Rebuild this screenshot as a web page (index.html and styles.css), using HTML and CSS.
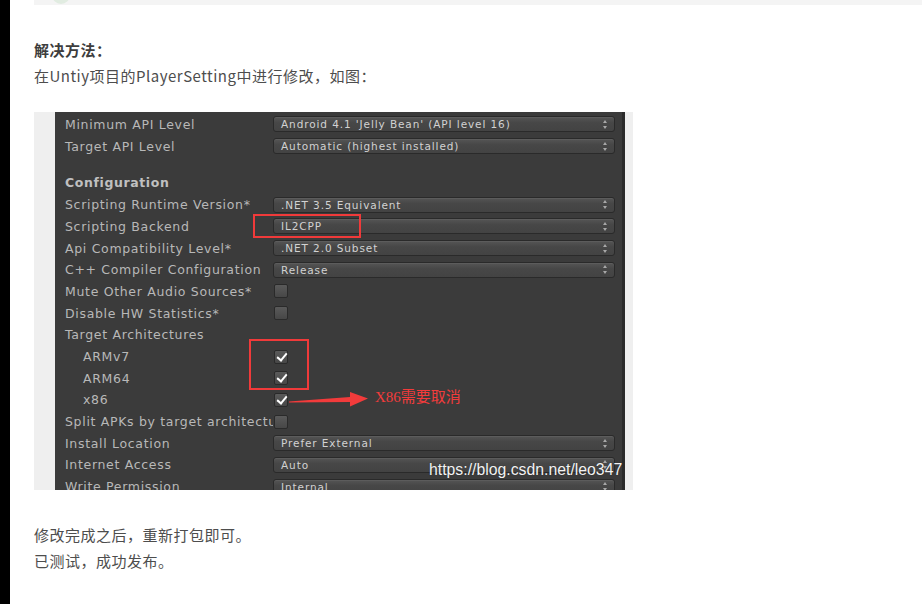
FILE: index.html
```html
<!DOCTYPE html>
<html>
<head>
    <meta charset="utf-8">
    <meta name="viewport" content="width=device-width, initial-scale=1.0">
    <link rel="stylesheet" href="styles.css">
</head>
<body>
    <div class="page">
        <div class="edge"></div>
        <div class="article">
            <div class="prev-shot">
                <span class="prev-badge"></span>
            </div>

            <h4>解决方法：</h4>
            <p>在Untiy项目的PlayerSetting中进行修改，如图：</p>

            <div class="shot">
                <div class="inspector">
                    <div class="row">
                        <div class="label">Minimum API Level</div>
                        <div class="field"><span>Android 4.1 'Jelly Bean' (API level 16)</span><i class="spin"></i></div>
                    </div>
                    <div class="row">
                        <div class="label">Target API Level</div>
                        <div class="field"><span>Automatic (highest installed)</span><i class="spin"></i></div>
                    </div>
                    <div class="spacer"></div>
                    <div class="row heading">
                        <div class="label">Configuration</div>
                    </div>
                    <div class="row">
                        <div class="label">Scripting Runtime Version*</div>
                        <div class="field"><span>.NET 3.5 Equivalent</span><i class="spin"></i></div>
                    </div>
                    <div class="row">
                        <div class="label">Scripting Backend</div>
                        <div class="field"><span>IL2CPP</span><i class="spin"></i></div>
                    </div>
                    <div class="row">
                        <div class="label">Api Compatibility Level*</div>
                        <div class="field"><span>.NET 2.0 Subset</span><i class="spin"></i></div>
                    </div>
                    <div class="row">
                        <div class="label">C++ Compiler Configuration</div>
                        <div class="field"><span>Release</span><i class="spin"></i></div>
                    </div>
                    <div class="row">
                        <div class="label">Mute Other Audio Sources*</div>
                        <div class="check"></div>
                    </div>
                    <div class="row">
                        <div class="label">Disable HW Statistics*</div>
                        <div class="check"></div>
                    </div>
                    <div class="row">
                        <div class="label">Target Architectures</div>
                    </div>
                    <div class="row">
                        <div class="label sub">ARMv7</div>
                        <div class="check on"></div>
                    </div>
                    <div class="row">
                        <div class="label sub">ARM64</div>
                        <div class="check on"></div>
                    </div>
                    <div class="row">
                        <div class="label sub">x86</div>
                        <div class="check on"></div>
                    </div>
                    <div class="row">
                        <div class="label">Split APKs by target architecture</div>
                        <div class="check"></div>
                    </div>
                    <div class="row">
                        <div class="label">Install Location</div>
                        <div class="field"><span>Prefer External</span><i class="spin"></i></div>
                    </div>
                    <div class="row">
                        <div class="label">Internet Access</div>
                        <div class="field"><span>Auto</span><i class="spin"></i></div>
                    </div>
                    <div class="row">
                        <div class="label">Write Permission</div>
                        <div class="field"><span>Internal</span><i class="spin"></i></div>
                    </div>
                </div>

                <!-- annotations drawn over the screenshot -->
                <div class="mark mark-backend"></div>
                <div class="mark mark-arch"></div>
                <svg class="arrow" width="599" height="378" viewBox="0 0 599 378">
                    <polygon points="255,289.6 255,290.6 316,290 316,294.5 334,286.5 316,280 316,285" fill="#f23b3b"/>
                </svg>
                <div class="note">X86需要取消</div>
                <div class="watermark">https://blog.csdn.net/leo347</div>
            </div>

            <p class="after">修改完成之后，重新打包即可。</p>
            <p>已测试，成功发布。</p>
        </div>
    </div>
</body>
</html>
```

FILE: styles.css
```css
body {
    margin: 0;
    background: #fff;
    font-family: "Noto Sans CJK SC", "Noto Sans", sans-serif;
}
.page {
    display: flex;
    min-height: 604px;
}
.edge {
    width: 10px;
    flex: none;
    background: #000;
}
.article {
    flex: 1;
    padding-left: 24px;
}
.prev-shot {
    height: 5px;
    background: #f4f4f4;
    position: relative;
    overflow: hidden;
}
.prev-badge {
    position: absolute;
    left: 18px;
    top: -14px;
    width: 18px;
    height: 18px;
    border-radius: 50%;
    background: #e1ece1;
}
h4 {
    margin: 32px 0 0;
    font-size: 15px;
    line-height: 26px;
    font-weight: bold;
    color: #3d3d3d;
    letter-spacing: 0.5px;
}
p {
    margin: 0;
    font-size: 15px;
    line-height: 26px;
    color: #4d4d4d;
    letter-spacing: 0.5px;
}
p.after {
    margin-top: 32px;
}

/* screenshot of the player settings inspector */
.shot {
    position: relative;
    margin-top: 23px;
    width: 599px;
    height: 378px;
    padding-left: 21px;
    box-sizing: border-box;
    background: #efefef;
}
.inspector {
    width: 570px;
    height: 100%;
    padding-top: 1.5px;
    background: #3b3b3b;
    border-right: 3px solid #2b2b2b;
    box-sizing: border-box;
    overflow: hidden;
    font-family: "DejaVu Sans", sans-serif;
}
.row {
    display: flex;
    align-items: center;
    height: 21.7px;
}
.row.heading {
    height: 23px;
}
.spacer {
    height: 14px;
}
.label {
    width: 218px;
    flex: none;
    padding-left: 10px;
    box-sizing: border-box;
    font-size: 12.5px;
    color: #b8b8b8;
    white-space: nowrap;
    overflow: hidden;
    letter-spacing: 0.68px;
}
.label.sub {
    padding-left: 28px;
}
.heading .label {
    font-weight: bold;
    color: #c0c0c0;
    letter-spacing: 0.6px;
}
.field {
    width: 342px;
    height: 16px;
    box-sizing: border-box;
    display: flex;
    align-items: center;
    justify-content: space-between;
    padding: 0 6px 0 7px;
    border: 1px solid #2a2a2a;
    border-radius: 3px;
    background: linear-gradient(#555, #474747 40%, #434343);
    box-shadow: inset 0 1px 0 #5c5c5c;
    font-size: 10.5px;
    color: #d2d2d2;
    letter-spacing: 0.9px;
    white-space: nowrap;
}
.spin {
    width: 5px;
    height: 9px;
    position: relative;
    flex: none;
}
.spin::before,
.spin::after {
    content: "";
    position: absolute;
    left: 0;
    border-left: 2.5px solid transparent;
    border-right: 2.5px solid transparent;
}
.spin::before {
    top: 0;
    border-bottom: 3px solid #a8a8a8;
}
.spin::after {
    bottom: 0;
    border-top: 3px solid #a8a8a8;
}
.check {
    width: 14px;
    height: 14px;
    margin-left: 1px;
    box-sizing: border-box;
    border: 1px solid #2a2a2a;
    border-radius: 2px;
    background: linear-gradient(#5a5a5a, #474747);
    position: relative;
}
.check.on::after {
    content: "";
    position: absolute;
    left: 4px;
    top: 0;
    width: 4px;
    height: 8px;
    border: solid #fff;
    border-width: 0 2.5px 2.5px 0;
    transform: rotate(40deg);
}

/* red annotations */
.mark {
    position: absolute;
    border: 2px solid #f03a3a;
}
.mark-backend {
    left: 219px;
    top: 102px;
    width: 104px;
    height: 20px;
}
.mark-arch {
    left: 215px;
    top: 227px;
    width: 56px;
    height: 47px;
}
.arrow {
    position: absolute;
    left: 0;
    top: 0;
}
.note {
    position: absolute;
    left: 341px;
    top: 275px;
    font-family: "Liberation Serif", "Noto Sans CJK SC", serif;
    font-size: 15px;
    line-height: 20px;
    color: #f23b3b;
}
.watermark {
    position: absolute;
    left: 395px;
    top: 348px;
    font-family: "Liberation Sans", Arial, sans-serif;
    font-size: 15.8px;
    line-height: 20px;
    color: #f2f2f2;
    text-shadow: 0 0 1px rgba(0, 0, 0, 0.4);
}
```
